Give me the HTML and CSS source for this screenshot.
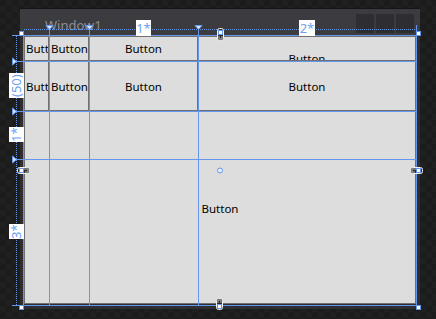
FILE: index.html
```html
<!DOCTYPE html>
<html lang="en">

<head>
  <meta charset="UTF-8" />
  <meta name="viewport" content="width=device-width, initial-scale=1.0" />
  <title>Window1 - Designer</title>
  <link rel="stylesheet" href="styles.css">
</head>

<body>
  <div class="stage">
    <div class="window">
      <div class="titlebar">
        <span class="title">Window1</span>
        <div class="caption">
          <span></span><span></span><span></span>
        </div>
      </div>
      <div class="grid">
        <!-- fila 0 -->
        <div class="btn">Button</div>
        <div class="btn">Button</div>
        <div class="btn">Button</div>
        <div class="btn baja">Button</div>
        <!-- fila 1 -->
        <div class="btn alta">Button</div>
        <div class="btn alta">Button</div>
        <div class="btn alta">Button</div>
        <div class="btn alta">Button</div>
        <!-- boton grande, filas 2 y 3 -->
        <div class="btn grande">Button</div>
      </div>
    </div>

    <svg class="adorners" width="436" height="319" viewBox="0 0 436 319">
      <g class="punteado">
        <line x1="24" y1="29.5" x2="416" y2="29.5" />
        <line x1="16.5" y1="36" x2="16.5" y2="305" />
      </g>
      <g class="guia">
        <line x1="12" y1="35.5" x2="417" y2="35.5" />
        <line x1="12" y1="305.5" x2="420" y2="305.5" />
        <line x1="23.5" y1="35" x2="23.5" y2="306" />
        <line x1="416.5" y1="25" x2="416.5" y2="306" />
        <line x1="49.5" y1="25" x2="49.5" y2="305" />
        <line x1="89.5" y1="25" x2="89.5" y2="305" />
        <line x1="198.5" y1="25" x2="198.5" y2="305" />
        <line x1="12" y1="61.5" x2="416" y2="61.5" />
        <line x1="12" y1="111.5" x2="416" y2="111.5" />
        <line x1="12" y1="159.5" x2="416" y2="159.5" />
      </g>
      <g class="flecha">
        <polygon points="46,25.5 53,25.5 49.5,29.5" />
        <polygon points="86,25.5 93,25.5 89.5,29.5" />
        <polygon points="195,25.5 202,25.5 198.5,29.5" />
        <polygon points="12.5,58 12.5,65 16.5,61.5" />
        <polygon points="12.5,108 12.5,115 16.5,111.5" />
        <polygon points="12.5,156 12.5,163 16.5,159.5" />
      </g>
      <g class="asa">
        <rect x="19.5" y="31.5" width="4" height="4" />
        <rect x="416.5" y="31.5" width="4" height="4" />
        <rect x="19.5" y="305.5" width="4" height="4" />
        <rect x="416.5" y="305.5" width="4" height="4" />
      </g>
      <g class="cadena">
        <rect x="217.5" y="28.5" width="6" height="12" rx="2" />
        <path d="M219 36 v3 h3 v-3" />
        <rect class="cuadro" x="218.5" y="30.5" width="4" height="4" />

        <rect x="216.5" y="298.5" width="6" height="11" rx="2" />
        <path d="M218 303 v-3 h3 v3" />
        <rect class="cuadro" x="217.5" y="304.5" width="4" height="4" />

        <rect x="17.5" y="167.5" width="12" height="6" rx="2" />
        <path d="M24 169 h4 v3 h-3" />
        <rect class="cuadro" x="19.5" y="168.5" width="4" height="4" />

        <rect x="410.5" y="167.5" width="12" height="6" rx="2" />
        <path d="M416 169 h-4 v3 h3" />
        <rect class="cuadro" x="416.5" y="168.5" width="4" height="4" />
      </g>
      <circle class="centro" cx="220" cy="170.5" r="2.5" />
    </svg>

    <div class="etiqueta col-a">1*</div>
    <div class="etiqueta col-b">2*</div>
    <div class="etiqueta vertical fila-a">(50)</div>
    <div class="etiqueta vertical fila-b">1*</div>
    <div class="etiqueta vertical fila-c">3*</div>
  </div>
</body>

</html>
```

FILE: styles.css
```css
:root {
  --fondo: #1e1e1e;
  --marco: #2f2f33;
  --barra: #3b3b40;
  --control: #dddddd;
  --borde-control: #707070;
  --azul: #6496eb;
}

* {
  box-sizing: border-box;
}

body {
  margin: 0;
  background: var(--fondo);
  font-family: "Noto Sans", "Open Sans", sans-serif;
}

.stage {
  position: relative;
  width: 436px;
  height: 319px;
  padding: 8px 0 0 20px;
  overflow: hidden;
  background: conic-gradient(#202020 25%, #1c1c1c 0 50%, #202020 0 75%, #1c1c1c 0) 0 0 / 12px 12px;
}

.window {
  width: 400px;
  height: 301px;
  background: var(--marco);
  padding: 0 4px 5px 4px;
  border-top: 1px solid #151515;
}

.titlebar {
  display: flex;
  justify-content: space-between;
  align-items: flex-start;
  height: 27px;
  margin: 0 -4px;
  padding: 5px 6px 0 25px;
  background: var(--barra);
}

.title {
  color: #8f8f94;
  font-size: 13px;
  line-height: 16px;
  padding-top: 3px;
}

.caption {
  display: flex;
  gap: 2px;
}

.caption span {
  width: 18px;
  height: 19px;
  background: #2e2e32;
}

.grid {
  display: grid;
  grid-template-columns: 25px 40px 1fr 2fr;
  grid-template-rows: 25px 50px 1fr 3fr;
  width: 392px;
  height: 268px;
  background: var(--control);
}

.btn {
  background: var(--control);
  border: 1px solid var(--borde-control);
  color: #000;
  font-size: 11.5px;
  line-height: 23px;
  text-align: center;
  white-space: nowrap;
  overflow: hidden;
  padding: 0 1px;
}

.btn.alta {
  line-height: 49px;
}

.btn.baja {
  line-height: 14px;
  padding-top: 15px;
}

.btn.grande {
  grid-row: 3 / 5;
  grid-column: 1 / 5;
  display: flex;
  align-items: center;
  justify-content: center;
  padding-top: 2px;
}

.adorners {
  position: absolute;
  top: 0;
  left: 0;
  pointer-events: none;
}

.punteado line {
  stroke: var(--azul);
  stroke-width: 1;
  stroke-dasharray: 1 1;
}

.guia line {
  stroke: var(--azul);
  stroke-width: 1;
}

.flecha polygon {
  fill: #dbe7fb;
  stroke: var(--azul);
  stroke-width: 1;
}

.asa rect,
.cadena .cuadro {
  fill: #fff;
  stroke: var(--azul);
  stroke-width: 1;
}

.cadena rect {
  fill: #2a2a2a;
  stroke: #f2f2f2;
  stroke-width: 1;
}

.cadena path {
  fill: none;
  stroke: #bdbdbd;
  stroke-width: 1;
}

.centro {
  fill: #e8eef9;
  stroke: var(--azul);
  stroke-width: 1;
}

.etiqueta {
  position: absolute;
  background: #fff;
  color: #6f9ff0;
  font-size: 13px;
  line-height: 16px;
  text-align: center;
  width: 15px;
  height: 16px;
}

.col-a {
  left: 136px;
  top: 20px;
}

.col-b {
  left: 299px;
  top: 20px;
  width: 16px;
}

.vertical {
  writing-mode: vertical-rl;
  transform: rotate(180deg);
  width: 15px;
  line-height: 15px;
}

.fila-a {
  left: 9px;
  top: 73px;
  height: 25px;
}

.fila-b {
  left: 9px;
  top: 127px;
  height: 15px;
}

.fila-c {
  left: 9px;
  top: 224px;
  height: 15px;
}
```
